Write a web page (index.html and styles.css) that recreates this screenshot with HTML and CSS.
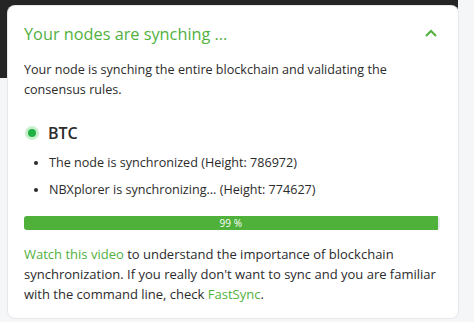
FILE: index.html
```html
<!DOCTYPE html>
<html>
<head>
<meta charset="utf-8">
<link rel="stylesheet" href="styles.css">
</head>
<body>
<div class="card">
  <div class="header">
    <h2 class="title">Your nodes are synching ...</h2>
    <svg class="chev" width="14" height="10" viewBox="0 0 14 10"><path d="M2 8 L7 3 L12 8" fill="none" stroke="#51b13e" stroke-width="2"/></svg>
  </div>
  <p class="intro">Your node is synching the entire blockchain and validating the consensus rules.</p>
  <div class="coin">
    <span class="dot"></span>
    <span class="coin-name">BTC</span>
  </div>
  <ul class="status">
    <li>The node is synchronized (Height: 786972)</li>
    <li>NBXplorer is synchronizing... (Height: 774627)</li>
  </ul>
  <div class="progress"><div class="bar" style="width:99.4%">99 %</div></div>
  <p class="outro"><a href="#">Watch this video</a> to understand the importance of blockchain synchronization. If you really don't want to sync and you are familiar with the command line, check <a href="#">FastSync</a>.</p>
</div>
</body>
</html>
```
FILE: styles.css
```css
html, body { margin: 0; padding: 0; }
body {
  width: 474px;
  height: 322px;
  overflow: hidden;
  font-family: "Open Sans", "Noto Sans", sans-serif;
  color: #2b2b2b;
  background: linear-gradient(#252525, #252525) 0 0 / 458px 78px no-repeat, #f5f6f8;
  padding: 6px 0 0 8px;
  box-sizing: border-box;
}
.card {
  width: 450px;
  height: 312px;
  box-sizing: border-box;
  background: #fff;
  border-radius: 7px;
  padding: 16px 18px 0 16px;
  box-shadow: 0 0 0 1px #e6e8ec;
}
.header {
  display: flex;
  align-items: center;
  justify-content: space-between;
  height: 24px;
}
.title {
  margin: 0;
  font-size: 16.3px;
  font-weight: 500;
  color: #51b13e;
  line-height: 24px;
}
.chev { margin-right: 2px; margin-top: -2px; }
.intro {
  margin: 14px 0 0;
  font-size: 12.6px;
  line-height: 20px;
}
.coin {
  display: flex;
  align-items: center;
  margin-top: 21px;
  height: 24px;
}
.dot {
  width: 8px;
  height: 8px;
  border-radius: 50%;
  background: #1fb141;
  box-shadow: 0 0 0 3px #c8f0cc;
  margin-left: 4px;
  margin-right: 12px;
}
.coin-name {
  font-size: 16px;
  font-weight: 600;
  line-height: 24px;
}
.status {
  margin: 8px 0 0;
  padding: 0 0 0 25px;
  font-size: 12.6px;
  line-height: 20px;
}
.status li + li { margin-top: 7px; }
.progress {
  margin-top: 16px;
  height: 14px;
  background: #e9ecef;
  border-radius: 3px;
  overflow: hidden;
}
.bar {
  height: 100%;
  background: #4fb13a;
  color: #fff;
  font-size: 10px;
  line-height: 14px;
  text-align: center;
}
.outro {
  margin: 14px 0 0;
  font-size: 13px;
  line-height: 20px;
}
.outro a { color: #51b13e; text-decoration: none; }
```
